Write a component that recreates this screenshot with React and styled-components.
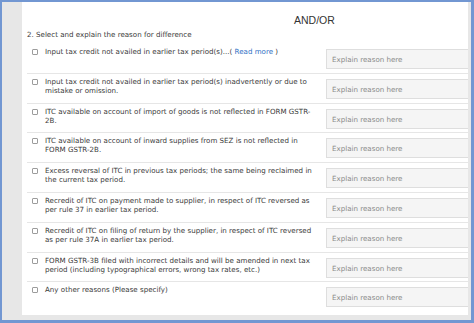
import React from "react";
import styled, { createGlobalStyle } from "styled-components";

const GlobalStyle = createGlobalStyle`
  html, body {
    margin: 0;
    padding: 0;
    background: #ffffff;
  }
  * {
    box-sizing: border-box;
  }
`;

const Frame = styled.div`
  width: 474px;
  height: 323px;
  border-style: solid;
  border-color: #7297d2;
  border-width: 2px 3px 3px 2px;
  background: #e7e7e7;
  padding: 0 3px 5px 20px;
  display: flex;
`;

const Panel = styled.div`
  flex: 1;
  background: #ffffff;
  overflow: hidden;
  display: flex;
  flex-direction: column;
  font-family: "DejaVu Sans", Verdana, sans-serif;
  color: #3a3a3a;
`;

const Heading = styled.div`
  padding: 12px 0 0 272px;
  margin-bottom: 3px;
  font-family: "Liberation Sans", Arial, sans-serif;
  font-size: 10.5px;
  line-height: 13px;
  color: #333;
`;

const Subtitle = styled.div`
  padding-left: 5px;
  font-size: 7.1px;
  line-height: 10px;
  margin-bottom: 4px;
`;

const Row = styled.div`
  display: flex;
  align-items: flex-start;
  margin-left: 5px;
  padding: 3px 0 3.8px 5px;
  border-bottom: ${(p) => (p.$last ? "none" : "1px solid #e6e6e6")};
`;

const Check = styled.input.attrs({ type: "checkbox" })`
  appearance: none;
  margin: 2px 7px 0 0;
  width: 6px;
  height: 6px;
  flex: none;
  border: 1px solid #9c9c9c;
  border-radius: 1px;
  background: #fff;
`;

const Label = styled.div`
  width: 273px;
  flex: none;
  font-size: 7.1px;
  line-height: 9px;
`;

const More = styled.a`
  color: #2f6fc4;
  text-decoration: none;
`;

const Reason = styled.textarea`
  flex: 1;
  margin: 2px 0 0 8px;
  height: 20px;
  padding: 5px 5px;
  resize: none;
  border: 1px solid #dedede;
  border-right: none;
  background: #f5f5f5;
  font-family: "DejaVu Sans", Verdana, sans-serif;
  font-size: 7.1px;
  line-height: 9px;
  overflow: hidden;
  &::placeholder {
    color: #8a8a8a;
  }
`;

const reasons = [
  null,
  "Input tax credit not availed in earlier tax period(s) inadvertently or due to mistake or omission.",
  "ITC available on account of import of goods is not reflected in FORM GSTR-2B.",
  "ITC available on account of inward supplies from SEZ is not reflected in FORM GSTR-2B.",
  "Excess reversal of ITC in previous tax periods; the same being reclaimed in the current tax period.",
  "Recredit of ITC on payment made to supplier, in respect of ITC reversed as per rule 37 in earlier tax period.",
  "Recredit of ITC on filing of return by the supplier, in respect of ITC reversed as per rule 37A in earlier tax period.",
  "FORM GSTR-3B filed with incorrect details and will be amended in next tax period (including typographical errors, wrong tax rates, etc.)",
  "Any other reasons (Please specify)",
];

const App = () => {
  return (
    <>
      <GlobalStyle />
      <Frame>
        <Panel>
          <Heading>AND/OR</Heading>
          <Subtitle>2. Select and explain the reason for difference</Subtitle>
          {reasons.map((text, i) => (
            <Row key={i} $last={i === reasons.length - 1}>
              <Check />
              <Label>
                {text === null ? (
                  <>
                    Input tax credit not availed in earlier tax period(s)...({" "}
                    <More href="#">Read more</More> )
                  </>
                ) : (
                  text
                )}
              </Label>
              <Reason placeholder="Explain reason here" />
            </Row>
          ))}
        </Panel>
      </Frame>
    </>
  );
};

export default App;
